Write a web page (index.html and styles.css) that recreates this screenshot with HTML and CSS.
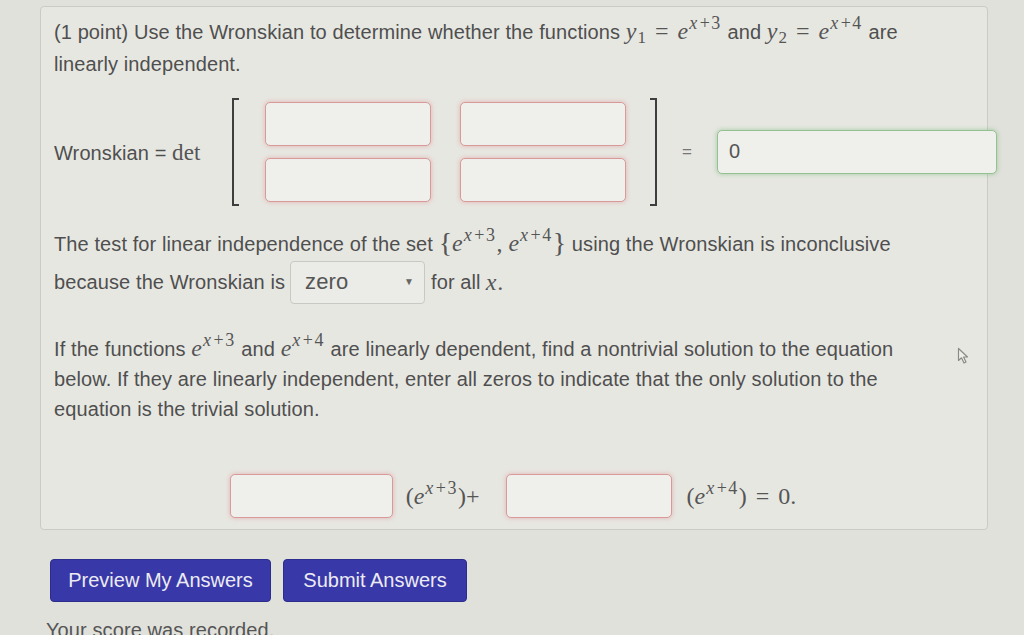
FILE: index.html
```html
<!DOCTYPE html>
<html>
<head>
<meta charset="utf-8">
<link rel="stylesheet" href="styles.css">
</head>
<body>
<div class="page">
  <div class="problem">
    <div class="intro">(1 point) Use the Wronskian to determine whether the functions <span class="m"><i>y</i><sub>1</sub><span class="op">=</span><i>e</i><sup><i>x</i>+3</sup></span> and <span class="m"><i>y</i><sub>2</sub><span class="op">=</span><i>e</i><sup><i>x</i>+4</sup></span> are<br>linearly independent.</div>

    <div class="wrow">
      <div class="wlabel">Wronskian = <span class="det">det</span></div>
      <div class="bracket left"></div>
      <div class="matrix">
        <div class="ans"></div>
        <div class="ans"></div>
        <div class="ans"></div>
        <div class="ans"></div>
      </div>
      <div class="bracket right"></div>
      <div class="eq">=</div>
      <div class="ans result">0</div>
    </div>

    <div class="test">
      <div class="line">The test for linear independence of the set <span class="m"><span class="brace">{</span><i>e</i><sup><i>x</i>+3</sup>, <i>e</i><sup><i>x</i>+4</sup><span class="brace">}</span></span> using the Wronskian is inconclusive</div>
      <div class="line sel">because the Wronskian is <span class="select"><span>zero</span><span class="arrow">&#9660;</span></span> for all <span class="m"><i>x</i>.</span></div>
    </div>

    <div class="para">If the functions <span class="m"><i>e</i><sup><i>x</i>+3</sup></span> and <span class="m"><i>e</i><sup><i>x</i>+4</sup></span> are linearly dependent, find a nontrivial solution to the equation<br>below. If they are linearly independent, enter all zeros to indicate that the only solution to the<br>equation is the trivial solution.</div>

    <div class="eqrow">
      <div class="ans e1"></div>
      <div class="m t1">(<i>e</i><sup><i>x</i>+3</sup>)+</div>
      <div class="ans e2"></div>
      <div class="m t2">(<i>e</i><sup><i>x</i>+4</sup>)<span class="op">=</span>0.</div>
    </div>
  </div>

  <div class="buttons">
    <button class="btn preview">Preview My Answers</button>
    <button class="btn submit">Submit Answers</button>
  </div>
  <div class="score">Your score was recorded.</div>
</div>
<svg class="cursor" width="14" height="18" viewBox="0 0 14 18"><path d="M1.5 1.5 L1.5 13.5 L4.5 10.8 L7 16 L9 15 L6.6 10 L10.5 10 Z" fill="#efefea" stroke="#8a8a86" stroke-width="1.2" stroke-linejoin="round"/></svg>
</body>
</html>
```

FILE: styles.css
```css
html, body {
  margin: 0;
  padding: 0;
}
body {
  width: 1024px;
  height: 635px;
  overflow: hidden;
  position: relative;
  background: #e1e1dc;
  font-family: "Liberation Sans", Arial, sans-serif;
  font-size: 20px;
  letter-spacing: 0.1px;
  color: #4f4f4f;
}
.page {
  padding: 6px 0 0 40px;
}
.problem {
  box-sizing: border-box;
  width: 948px;
  height: 524px;
  border: 1px solid #cbcbc6;
  border-radius: 4px;
  background: #e7e7e2;
  padding: 8px 13px 0 13px;
}
.intro {
  line-height: 32px;
  white-space: nowrap;
}
.m {
  font-family: "Liberation Serif", "Times New Roman", serif;
  font-size: 24px;
  letter-spacing: 0;
  color: #555;
}
.m i {
  font-style: italic;
  padding-right: 1px;
}
.m sub {
  font-size: 17px;
  vertical-align: -4px;
  line-height: 0;
}
.m sup {
  font-size: 18px;
  letter-spacing: 1.5px;
  vertical-align: 10px;
  line-height: 0;
}
.op {
  margin: 0 9px;
}
.wrow {
  display: flex;
  align-items: center;
  margin-top: 18px;
  height: 108px;
}
.wrow > * {
  flex-shrink: 0;
}
.wlabel {
  width: 178px;
  padding-top: 2px;
}
.det {
  font-family: "Liberation Serif", "Times New Roman", serif;
  font-size: 23px;
  color: #555;
}
.bracket {
  width: 7px;
  height: 108px;
  box-sizing: border-box;
  border: 2px solid #3e3e3e;
}
.bracket.left {
  border-right: none;
}
.bracket.right {
  border-left: none;
  margin-left: 24px;
}
.matrix {
  margin-left: 26px;
  display: grid;
  grid-template-columns: 166px 166px;
  grid-template-rows: 44px 44px;
  column-gap: 29px;
  row-gap: 12px;
}
.ans {
  box-sizing: border-box;
  height: 44px;
  border: 1.5px solid #d79a98;
  border-radius: 5px;
  background: #efefeb;
  box-shadow: 0 0 4px 1px rgba(220, 130, 130, 0.35);
  flex-shrink: 0;
}
.eq {
  width: 60px;
  text-align: center;
  font-size: 17px;
  color: #777;
}
.ans.result {
  width: 280px;
  border-color: #93c193;
  box-shadow: 0 0 4px 1px rgba(110, 180, 110, 0.4);
  padding-left: 11px;
  line-height: 41px;
  color: #555;
}
.test {
  margin-top: 22px;
}
.line {
  height: 30px;
  line-height: 30px;
  white-space: nowrap;
}
.brace {
  font-size: 28px;
  vertical-align: -1px;
}
.line.sel {
  display: flex;
  align-items: center;
  height: 44px;
  margin-top: 2px;
}
.select {
  box-sizing: border-box;
  display: inline-flex;
  align-items: center;
  justify-content: space-between;
  width: 135px;
  height: 43px;
  margin: 0 6px 0 5px;
  padding: 0 10px 0 14px;
  border: 1px solid #c9c9c4;
  border-radius: 4px;
  background: #ebebe7;
  font-size: 22px;
  color: #555;
}
.arrow {
  font-size: 10px;
  color: #666;
}
.line.sel .m {
  margin-left: 5px;
}
.para {
  margin-top: 29px;
  line-height: 30px;
  white-space: nowrap;
}
.eqrow {
  margin-top: 50px;
  display: flex;
  align-items: center;
  justify-content: center;
  padding-right: 2px;
}
.ans.e1 {
  width: 163px;
}
.ans.e2 {
  width: 166px;
}
.t1 {
  margin: 0 27px 0 13px;
}
.t2 {
  margin-left: 14px;
}
.buttons {
  display: flex;
  gap: 12px;
  margin: 29px 0 0 10px;
}
.btn {
  box-sizing: border-box;
  height: 43px;
  border: 1px solid #2c2c8c;
  border-radius: 4px;
  background: #3838a8;
  color: #ecebf2;
  font-family: "Liberation Sans", Arial, sans-serif;
  font-size: 20px;
  padding: 0;
}
.btn.preview {
  width: 221px;
}
.btn.submit {
  width: 184px;
}
.score {
  margin: 17px 0 0 6px;
  color: #555;
}
.cursor {
  position: absolute;
  left: 957px;
  top: 347px;
}
```
